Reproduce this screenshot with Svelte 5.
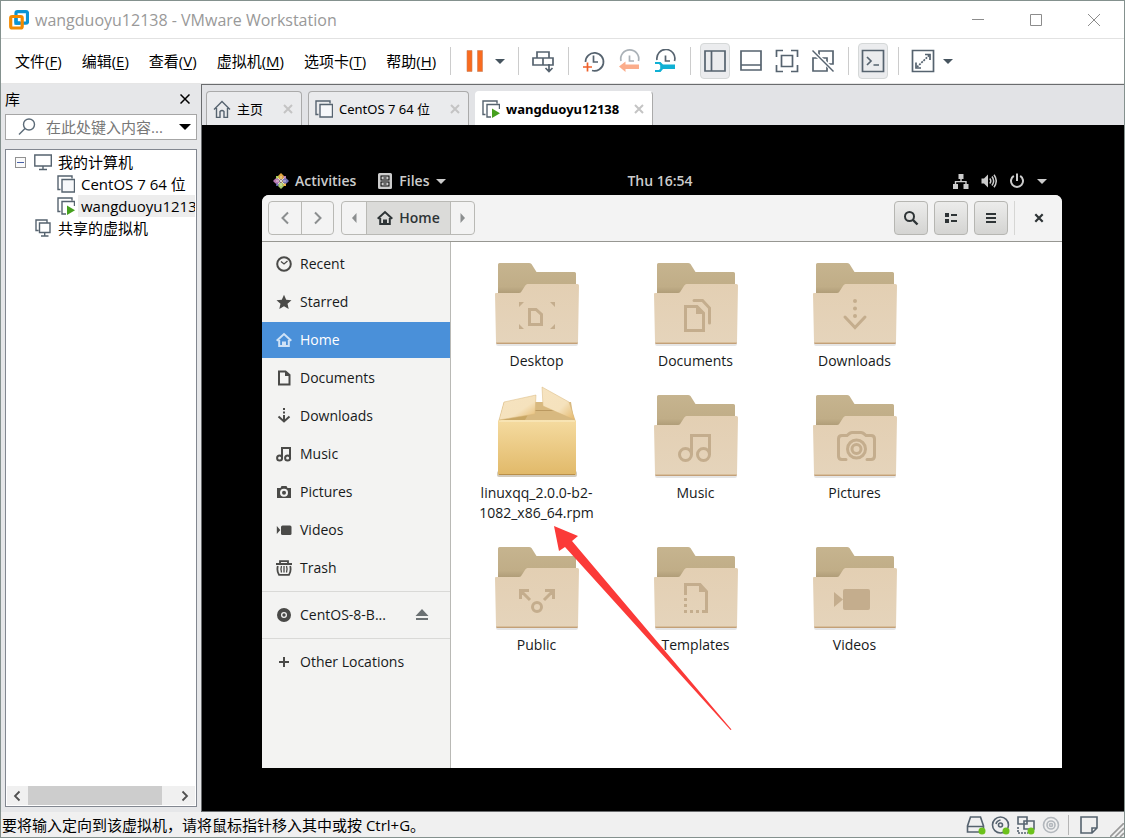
<script lang="ts">
  type Item = { icon: string; label: string };

  const menus = [
    { text: '文件', key: 'F' },
    { text: '编辑', key: 'E' },
    { text: '查看', key: 'V' },
    { text: '虚拟机', key: 'M' },
    { text: '选项卡', key: 'T' },
    { text: '帮助', key: 'H' }
  ];

  const tabs = [
    { icon: 'homeTab', label: '主页' },
    { icon: 'vm', label: 'CentOS 7 64 位' },
    { icon: 'vmOn', label: 'wangduoyu12138' }
  ];

  const places: Item[] = [
    { icon: 'recent', label: 'Recent' },
    { icon: 'star', label: 'Starred' },
    { icon: 'home', label: 'Home' },
    { icon: 'doc', label: 'Documents' },
    { icon: 'down', label: 'Downloads' },
    { icon: 'music', label: 'Music' },
    { icon: 'camera', label: 'Pictures' },
    { icon: 'video', label: 'Videos' },
    { icon: 'trash', label: 'Trash' }
  ];

  const files: Item[] = [
    { icon: 'fDesktop', label: 'Desktop' },
    { icon: 'fDocuments', label: 'Documents' },
    { icon: 'fDownloads', label: 'Downloads' },
    { icon: 'package', label: 'linuxqq_2.0.0-b2-\n1082_x86_64.rpm' },
    { icon: 'fMusic', label: 'Music' },
    { icon: 'fPictures', label: 'Pictures' },
    { icon: 'fPublic', label: 'Public' },
    { icon: 'fTemplates', label: 'Templates' },
    { icon: 'fVideos', label: 'Videos' }
  ];

  let activeTab = $state(2);
  let activePlace = $state('Home');
  let search = $state('');

  // 24x24 toolbar icons
  const tool: Record<string, string> = {
    pause: '<path fill="#f96b1f" stroke="#c9825c" stroke-width=".6" d="M4 1.500h5v21H4zM14.500 1.500h5v21h-5z"/>',
    send: '<path d="M6 3h12v6H6zM2 9h10v7H2zM12 9h10v7H12zM18 15v7M14.500 19l3.500 3.500L21.500 19"/>',
    snapshot: '<path d="M4.500 13a9 9 0 1 1 6.500 8.500M12.500 6.500V13H17"/><path stroke="#f0602a" d="M2 18h9M6.500 13.500v9"/>',
    revert: '<g opacity=".5"><path d="M4 12a9 9 0 1 1 17.500 0M12.500 6.500V12H17"/></g><path fill="#fbad8b" stroke="none" d="M2 17.500l6.500-5v3H22v4.500H8.500v3z"/>',
    manage: '<path d="M4 11a9 9 0 1 1 17.500 1M12.500 6.500V12H17"/><path fill="#0fb0d4" stroke="none" d="M2 13h5.500l2.500 2.500h12v4.500H10l-2.500 3H2v-2h4l1.200-1.200v-3.600L6 15H2z"/>',
    side: '<path d="M2 2h20v20H2zM8.500 2v20"/>',
    thumb: '<path d="M2 2h20v19H2zM2 16h20"/>',
    full: '<path d="M1.500 8V1.500H8M16 1.500h6.500V8M22.500 16v6.500H16M8 22.500H1.500V16M6.500 6.500h11v11h-11z"/>',
    unity: '<path d="M8 8V2h14v13h-5M2 9h14v13H2z"/><path stroke="#fff" stroke-width="4" d="M2 2.500L23 22"/><path stroke-width="1.400" d="M1.500 1.500l21 21"/>',
    console: '<path d="M1.500 1.500h21v21h-21z"/><path d="M6 8l4 4-4 4M12.500 16H18"/>',
    stretch: '<path d="M1.500 1.500h21v21h-21z"/><path d="M14 5.500h5V11M10 19H5v-5.500"/><path stroke-dasharray="2 1" d="M6 18L18.500 6"/>'
  };

  // 18x18 icons of the library and tabs
  const small: Record<string, string> = {
    homeTab: '<path d="M1 9.500l8-8 8 8M3.500 8v9.500H7v-6q2-2 4 0v6h3.500V8"/>',
    vm: '<path d="M3.500 14.500H1V1h14v2.500"/><path fill="#f7f8fa" d="M5 4.500h12.500v12.500H5z"/>',
    vmOn: '<path d="M3.500 14.500H1V1h14v2.500M9 17H5V4.500h12.500V9"/><path fill="#46a01e" stroke="none" d="M10 8.500l8 4.750-8 4.750z"/>',
    pc: '<path d="M.8 2h16.500v11H.8zM5 16.500h8M9 13v3"/>',
    shared: '<path d="M4.500 11.500H2V1h11v2.500M5.500 4H16v9.500H5.500zM7 17h7.500M10.700 13.500V17"/>'
  };

  // 16x16 symbolic icons of the file manager
  const sym: Record<string, string> = {
    recent: '<path fill="none" stroke="currentColor" stroke-width="2" d="M8 1.200a6.800 6.800 0 1 1 0 13.600A6.800 6.800 0 0 1 8 1.200z"/><path fill="none" stroke="currentColor" stroke-width="1.300" d="M5 5.500l3 2.500 3.500-3"/>',
    star: '<path d="M8 .8l2.200 4.900 5.300.6-4 3.500 1.200 5.200L8 12.300 3.300 15l1.200-5.200-4-3.500 5.300-.6z"/>',
    home: '<path fill="none" stroke="currentColor" stroke-width="2" d="M.7 8.700L8 2l7.300 6.700M3.200 8v6h9.600V8"/><path d="M6 9.500h4V15H6z"/>',
    doc: '<path fill="none" stroke="currentColor" stroke-width="2" d="M3 1.500h6.500L13.500 5v9.500H3z"/><path d="M9 1v5h5z"/>',
    down: '<path d="M7 0h2v2H7zM7 3.500h2v2H7zM7 7h2v6H7z"/><path fill="none" stroke="currentColor" stroke-width="2" d="M2.500 8.500L8 13.500l5.500-5"/>',
    music: '<path fill="none" stroke="currentColor" stroke-width="2" d="M6 12V2h8v10"/><circle cx="3.600" cy="12" r="2.500" fill="none" stroke="currentColor" stroke-width="2"/><circle cx="11.600" cy="12" r="2.500" fill="none" stroke="currentColor" stroke-width="2"/>',
    camera: '<path fill-rule="evenodd" d="M1 4h3.500l1-2h5l1 2H15v10H1zM8 4.700a4 4 0 1 0 0 8 4 4 0 0 0 0-8z"/><circle cx="8" cy="8.700" r="2"/>',
    video: '<rect x="5" y="3.500" width="10.500" height="9.500" rx="1.500"/><path d="M.8 4l3.500 4-3.500 4z"/>',
    trash: '<path fill="none" stroke="currentColor" stroke-width="1.800" d="M0 4h16M4 3.500V1.200h8v2.300M1.800 6q-1.200 5 1.200 8.800h10q2.400-3.800 1.200-8.800"/><path fill="none" stroke="currentColor" stroke-width="1.300" d="M5.500 6q-1.200 3.500 0 6.500M8 6v6.500M10.500 6q1.200 3.500 0 6.500"/>',
    disc: '<path fill-rule="evenodd" d="M8 1a7 7 0 1 1 0 14A7 7 0 0 1 8 1zm0 4a3 3 0 1 0 0 6 3 3 0 0 0 0-6z"/><circle cx="8" cy="8" r="1.700"/>',
    plus: '<path d="M7 3h2v4h4v2H9v4H7V9H3V7h4z"/>',
    eject: '<path d="M8 2l6.500 7h-13zM2 11h12v2H2z"/>',
    back: '<path fill="none" stroke="currentColor" stroke-width="2" d="M11 2.500L5.500 8l5.500 5.500"/>',
    forward: '<path fill="none" stroke="currentColor" stroke-width="2" d="M5 2.500L10.500 8 5 13.500"/>',
    left: '<path d="M10.500 3v10L6 8z"/>',
    right: '<path d="M5.500 3v10L10 8z"/>',
    find: '<circle cx="6.500" cy="6.500" r="4.500" fill="none" stroke="currentColor" stroke-width="2"/><path fill="none" stroke="currentColor" stroke-width="2.400" d="M10 10l4.500 4.500"/>',
    list: '<path d="M2 3h4v4H2zM2 9h4v4H2zM8 4h6v2H8zM8 10h6v2H8z"/>',
    burger: '<path d="M3 3h10v2H3zM3 7h10v2H3zM3 11h10v2H3z"/>',
    close: '<path fill="none" stroke="currentColor" stroke-width="2.200" d="M4.300 4.300l7.400 7.400M11.700 4.300l-7.400 7.400"/>',
    drawer: '<path fill-rule="evenodd" d="M2.500 0h11A1.500 1.500 0 0 1 15 1.500v13a1.500 1.500 0 0 1-1.500 1.500h-11A1.500 1.500 0 0 1 1 14.500v-13A1.500 1.500 0 0 1 2.500 0zM3.500 2.500v5h9v-5zm0 6v5h9v-5z"/><path d="M4.500 3.500h7v3h-7zM4.500 9.500h7v3h-7z"/><path fill="#000" d="M6.500 4.500h3v1h-3zM6.500 10.500h3v1h-3z"/>',
    network: '<path d="M5.500 1h5v5h-5zM0 11h5v5H0zM10.500 11h5v5h-5zM7.300 6h1.400v2h5v3h-1.400V9.300H3.200V11H1.800V8h5.500z"/>',
    sound: '<path d="M.5 5.500H3L7 1.500v13l-4-4H.5z"/><path fill="none" stroke="currentColor" stroke-width="1.500" d="M8.800 5.500q2 2.500 0 5M11 3.500q3.300 4.500 0 9M13 1.800q4.500 6.200 0 12.400"/>',
    power: '<path fill="none" stroke="currentColor" stroke-width="2" d="M4.800 2.800a6 6 0 1 0 6.400 0M8 .5V8"/>',
    logo: '<path fill="#a3ca53" d="M3 3h4.500v4.500H3z"/><path fill="#b67bb0" d="M8.500 3H13v4.500H8.500z"/><path fill="#efb13c" d="M8.500 8.500H13V13H8.500z"/><path fill="#5c5aa0" d="M3 8.500h4.500V13H3z"/><path fill="#e0a53e" d="M8 0l2.500 2.500V6h-5V2.500z"/><path fill="#7573b8" d="M16 8l-2.500 2.500H10v-5h3.500z"/><path fill="#a8c869" d="M8 16l-2.500-2.500V10h5v3.500z"/><path fill="#b97ab3" d="M0 8l2.500-2.500H6v5H2.500z"/><path stroke="#f4efe8" stroke-width=".7" d="M8 3v10M3 8h10M4.500 4.500l7 7M11.500 4.500l-7 7"/>'
  };

  // emblems on the 84x84 folders
  const emblem: Record<string, string> = {
    fDesktop: '<path d="M34.500 46.500H41l5.500 5V61.500h-12z"/><path fill="#c4ad8d" stroke="none" d="M24 39h5l-5 5zM60 39v5l-5-5zM24 66v-5l5 5zM60 66h-5l5-5z"/>',
    fDocuments: '<path d="M31.500 43.500H43l6.500 6.500v17.500h-18z"/><path fill="#c4ad8d" stroke="none" d="M42 42v9h9z"/><path stroke-linecap="round" d="M40 37.500h8.500L55.500 45v15"/>',
    fDownloads: '<path stroke-linecap="round" stroke-width="4" d="M42 38v.01M42 45.500v.01M42 53v.01"/><path stroke-linecap="round" d="M32 54l10 10.500L52 54"/>',
    fMusic: '<circle cx="31.500" cy="59.500" r="6"/><circle cx="49.500" cy="59.500" r="6"/><path d="M37.500 60V40.500h18V60"/>',
    fPictures: '<circle cx="43.500" cy="54" r="9"/><circle cx="43.500" cy="54" r="4.500"/><path stroke-linecap="round" d="M33 64.500h-4q-3.500 0-3.500-3.500V44q0-3.500 3.500-3.500h5q3-3 5-3h9q2 0 5 3h5q3.500 0 3.500 3.500v17q0 3.500-3.500 3.500h-4"/>',
    fPublic: '<circle cx="42" cy="60" r="4.500"/><path d="M35 53L26 44M25.500 52v-8.500H34M49 53l9-9M58.500 52v-8.500H50"/>',
    fTemplates: '<path d="M31.500 48V37.500H46l6.500 7V66"/><path fill="#c4ad8d" stroke="none" d="M45 36v9h9z"/><path stroke-dasharray="3 3" d="M31.500 51v12M30 64.500h24"/>',
    fVideos: '<path fill="#c4ad8d" stroke="none" d="M21 45l9 7.500-9 7.500z"/><rect fill="#c4ad8d" stroke="none" x="30" y="42" width="27" height="21" rx="2"/>'
  };
</script>

{#snippet toolBtn(name: string, title: string, pressed = false)}
  <button class="tool" class:pressed aria-label={title}>
    <svg viewBox="0 0 24 24" width="24" height="24">{@html tool[name]}</svg>
  </button>
{/snippet}

{#snippet smallIcon(name: string)}
  <svg class="small" viewBox="0 0 18 18" width="18" height="18">{@html small[name]}</svg>
{/snippet}

{#snippet symIcon(name: string)}
  <svg class="sym" viewBox="0 0 16 16" width="16" height="16">{@html sym[name]}</svg>
{/snippet}

<div class="window">
  <header class="titlebar">
    <svg viewBox="0 0 20 20" width="20" height="20" fill="none" stroke-width="3.200">
      <rect x="7" y="1.700" width="11.500" height="11.500" rx="1.500" stroke="#0b94d3" />
      <rect x="1.700" y="6.500" width="11.500" height="11.500" rx="1.500" stroke="#f38b00" />
      <path d="M7 8v5.200h4" stroke="#0b94d3" />
    </svg>
    <h1>wangduoyu12138 - VMware Workstation</h1>
    <div class="wm">
      <button aria-label="最小化"><svg viewBox="0 0 12 12" width="12" height="12"><path d="M0 5.500h12" /></svg></button>
      <button aria-label="最大化"><svg viewBox="0 0 12 12" width="12" height="12"><path d="M.5.5h11v11H.5z" /></svg></button>
      <button aria-label="关闭"><svg viewBox="0 0 12 12" width="12" height="12"><path d="M0 0l12 12M12 0L0 12" /></svg></button>
    </div>
  </header>

  <div class="toolbar">
    <nav class="menus">
      {#each menus as menu}
        <button>{menu.text}(<u>{menu.key}</u>)</button>
      {/each}
    </nav>
    <div class="group">
      {@render toolBtn('pause', '挂起')}
      <button class="caret" aria-label="电源选项"></button>
    </div>
    <div class="group">
      {@render toolBtn('send', 'Ctrl+Alt+Del')}
    </div>
    <div class="group">
      {@render toolBtn('snapshot', '拍摄快照')}
      {@render toolBtn('revert', '恢复快照')}
      {@render toolBtn('manage', '管理快照')}
    </div>
    <div class="group">
      {@render toolBtn('side', '显示库', true)}
      {@render toolBtn('thumb', '缩略图栏')}
      {@render toolBtn('full', '全屏')}
      {@render toolBtn('unity', 'Unity')}
    </div>
    <div class="group">
      {@render toolBtn('console', '控制台视图', true)}
    </div>
    <div class="group">
      {@render toolBtn('stretch', '自由拉伸')}
      <button class="caret" aria-label="拉伸选项"></button>
    </div>
  </div>

  <div class="body">
    <aside class="library">
      <div class="lib-title">
        <h2>库</h2>
        <button aria-label="关闭库"><svg viewBox="0 0 10 10" width="10" height="10"><path d="M.5.5l9 9M9.500.5l-9 9" stroke="#000" stroke-width="1.500" /></svg></button>
      </div>
      <div class="search">
        <svg viewBox="0 0 18 18" width="18" height="18" fill="none" stroke="#5c6b78" stroke-width="1.400">
          <circle cx="11" cy="6.500" r="5.500" /><path d="M7 10.500L1 16.500" />
        </svg>
        <input type="text" aria-label="搜索" placeholder="在此处键入内容..." bind:value={search} />
        <button class="caret black" aria-label="筛选"></button>
      </div>
      <div class="tree">
        <ul>
          <li>
            <span class="expander"></span>
            {@render smallIcon('pc')}
            <span class="name">我的计算机</span>
          </li>
          <li class="child">{@render smallIcon('vm')}<span class="name">CentOS 7 64 位</span></li>
          <li class="child">{@render smallIcon('vmOn')}<span class="name selected">wangduoyu12138</span></li>
          <li class="shared">{@render smallIcon('shared')}<span class="name">共享的虚拟机</span></li>
        </ul>
        <div class="scrollbar">
          <svg viewBox="0 0 8 12" width="8" height="12"><path d="M6.500 1.500L2 6l4.500 4.500" /></svg>
          <div class="track"><div class="thumb"></div></div>
          <svg viewBox="0 0 8 12" width="8" height="12"><path d="M1.500 1.500L6 6l-4.500 4.500" /></svg>
        </div>
      </div>
    </aside>

    <main class="main">
      <div class="tabs">
        {#each tabs as tab, i}
          <div class="tab" class:active={activeTab === i}>
            <button class="tab-label" onclick={() => (activeTab = i)}>
              {@render smallIcon(tab.icon)}{tab.label}
            </button>
            <button class="tab-close" aria-label="关闭 {tab.label}">
              <svg viewBox="0 0 10 10" width="10" height="10"><path d="M1 1l8 8M9 1L1 9" /></svg>
            </button>
          </div>
        {/each}
      </div>

      <div class="screen">
        <div class="topbar">
          <div class="top-left">
            <button>{@render symIcon('logo')}Activities</button>
            <button>{@render symIcon('drawer')}Files<span class="tri"></span></button>
          </div>
          <span class="clock">Thu 16:54</span>
          <div class="top-right">
            {@render symIcon('network')}
            {@render symIcon('sound')}
            {@render symIcon('power')}
            <span class="tri"></span>
          </div>
        </div>

        <section class="nautilus">
          <div class="headerbar">
            <div class="linked nav">
              <button aria-label="Back">{@render symIcon('back')}</button>
              <button aria-label="Forward">{@render symIcon('forward')}</button>
            </div>
            <div class="linked path">
              <button aria-label="Scroll left">{@render symIcon('left')}</button>
              <button class="current">{@render symIcon('home')}Home</button>
              <button aria-label="Scroll right">{@render symIcon('right')}</button>
            </div>
            <div class="actions">
              <button aria-label="Search">{@render symIcon('find')}</button>
              <button aria-label="List view">{@render symIcon('list')}</button>
              <button aria-label="Menu">{@render symIcon('burger')}</button>
            </div>
            <button class="win-close" aria-label="Close">{@render symIcon('close')}</button>
          </div>

          <div class="content">
            <nav class="places">
              {#each places as place}
                <button class:current={activePlace === place.label} onclick={() => (activePlace = place.label)}>
                  {@render symIcon(place.icon)}<span>{place.label}</span>
                </button>
              {/each}
              <hr />
              <button>{@render symIcon('disc')}<span>CentOS-8-B...</span><i class="eject">{@render symIcon('eject')}</i></button>
              <hr />
              <button>{@render symIcon('plus')}<span>Other Locations</span></button>
            </nav>

            <div class="files">
              <svg class="defs" width="0" height="0" aria-hidden="true">
                <defs>
                  <linearGradient id="folderBack" x2="0" y2="1">
                    <stop offset="0" stop-color="#c6b48f" /><stop offset=".7" stop-color="#c0ad87" /><stop offset="1" stop-color="#a6936f" />
                  </linearGradient>
                  <linearGradient id="folderFront" x2="0" y2="1">
                    <stop offset="0" stop-color="#e3cfb3" /><stop offset="1" stop-color="#e5d4bb" />
                  </linearGradient>
                  <linearGradient id="boxFront" x2="0" y2="1">
                    <stop offset="0" stop-color="#f5dba0" /><stop offset="1" stop-color="#e1b969" />
                  </linearGradient>
                  <linearGradient id="boxFlap" x2="1" y2="1">
                    <stop offset="0" stop-color="#f6e3c0" /><stop offset=".6" stop-color="#f5e2bd" /><stop offset="1" stop-color="#e3b668" />
                  </linearGradient>
                </defs>
              </svg>

              {#each files as file}
                <button class="file">
                  <svg viewBox="0 0 84 84" width="84" height="84">
                    {#if file.icon === 'package'}
                      <rect x="2" y="76" width="80" height="6" rx="2" fill="#8f7c5a" opacity=".4" />
                      <path fill="#c9a764" d="M9 7h65l6 19H4z" />
                      <path fill="#d8b980" d="M40 7h36l3 18H30z" />
                      <path stroke="#bb9960" d="M38 15.500h26" />
                      <rect x="3" y="25" width="78" height="55" rx="1" fill="url(#boxFront)" />
                      <path stroke="#fbedc7" d="M4 26h76" />
                      <path stroke="#b98f49" d="M4 79.500h76" />
                      <path fill="url(#boxFlap)" stroke="#d9b67a" stroke-width=".5" d="M4 25L9 7l32-7-1 19z" />
                      <path fill="url(#boxFlap)" stroke="#d9b67a" stroke-width=".5" d="M47-8l27 15 6 18-32-14z" />
                    {:else}
                      <rect x="1" y="76" width="82" height="7" rx="2" fill="#000" opacity=".1" />
                      <path fill="url(#folderBack)" d="M3 1.500Q3 0 4.500 0H34q1.500 0 2.500 1l5 8h38q1.500 0 1.500 1.500V34H3z" />
                      <path fill="#c3a078" d="M1 70h82v9.500q0 1.500-1.500 1.500h-79Q1 81 1 79.500z" />
                      <path fill="url(#folderFront)" d="M0 31q0-1 1-1h23q1.500 0 2.300-1.200l4-6.300Q31.200 21 32.500 21H82.500q1.500 0 1.500 1.500L83 79q0 1-1.500 1h-79Q1 80 1 79z" />
                      <path stroke="#d8bf9c" d="M2 79.500h80" />
                      <g fill="none" stroke="#c4ad8d" stroke-width="3">{@html emblem[file.icon]}</g>
                    {/if}
                  </svg>
                  <span>{file.label}</span>
                </button>
              {/each}

              <svg class="pointer" viewBox="0 0 180 206" width="180" height="206" aria-hidden="true">
                <path fill="#fb3a38" d="M1 0l24 10-6 5 159.500 188.500-1 .5L12 21l-6 4z" />
              </svg>
            </div>
          </div>
        </section>
      </div>
    </main>
  </div>

  <footer class="status">
    <span>要将输入定向到该虚拟机，请将鼠标指针移入其中或按 Ctrl+G。</span>
    <div class="devices">
      <svg viewBox="0 0 20 20" width="20" height="20"><path d="M4.500 2h10l3 9v6H1.500v-6zM1.500 11.500h16" /><circle class="dot" cx="16" cy="16" r="3.500" /></svg>
      <svg viewBox="0 0 20 20" width="20" height="20"><circle cx="9.500" cy="10" r="8" /><circle cx="9.500" cy="10" r="2" /><path d="M9.500 5q-4 1-4.500 4" /><circle class="dot" cx="15" cy="16" r="3.500" /></svg>
      <svg viewBox="0 0 20 20" width="20" height="20"><path d="M2 2h9v7H2zM8 6h10v8H8z" /><path stroke-dasharray="2 1" d="M2 12v6h10" /><circle class="dot" cx="15" cy="16" r="3.500" /></svg>
      <svg viewBox="0 0 20 20" width="20" height="20" opacity=".4"><circle cx="10" cy="10" r="7.500" /><circle cx="10" cy="10" r="4" /><circle cx="10" cy="10" r="1.500" /></svg>
    </div>
    <div class="notes">
      <svg viewBox="0 0 20 20" width="20" height="20"><path d="M2 2h16v11l-5 5H2zM18 13h-5v5" /></svg>
    </div>
    <svg class="grip" viewBox="0 0 14 14" width="14" height="14"><path d="M0 14L14 0M5 14l9-9M10 14l4-4" /></svg>
  </footer>
</div>

<style>
  :global(body) {
    margin: 0;
  }

  .window {
    display: flex;
    flex-direction: column;
    box-sizing: border-box;
    min-height: 100vh;
    border: 1px solid #84918e;
    background: #fff;
    color: #000;
    font-family: 'Open Sans', 'Noto Sans CJK SC', sans-serif;
    font-size: 15px;
    line-height: 22px;
  }

  button {
    display: flex;
    align-items: center;
    justify-content: center;
    padding: 0;
    border: 0;
    background: none;
    color: inherit;
    font: inherit;
    white-space: nowrap;
  }

  svg {
    display: block;
    flex: none;
    fill: none;
  }

  h1,
  h2 {
    margin: 0;
    font-size: 15px;
    font-weight: 400;
  }

  .titlebar {
    display: flex;
    align-items: center;
    gap: 6px;
    height: 37px;
    padding: 0 1px 0 8px;
    border-bottom: 1px solid #e2e2e2;
  }

  .titlebar h1 {
    flex: 1;
    color: #999;
    font-size: 16px;
  }

  .wm {
    display: flex;
  }

  .wm button {
    width: 58px;
    height: 36px;
  }

  .wm path {
    stroke: #8c8c8c;
  }

  .toolbar {
    display: flex;
    align-items: center;
    height: 44px;
    border-bottom: 1px solid #e6e6e6;
  }

  .menus {
    display: flex;
    gap: 20px;
    padding: 0 14px;
  }

  .menus u {
    text-underline-offset: 2px;
  }

  .group {
    display: flex;
    align-items: center;
    gap: 6px;
    height: 28px;
    padding: 0 10px 0 9px;
    border-left: 1px solid #ccc;
  }

  .tool {
    width: 30px;
    height: 36px;
    border: 1px solid transparent;
    border-radius: 4px;
  }

  .tool.pressed {
    background: #ebecee;
    border-color: #d5d8d8;
  }

  .tool svg {
    stroke: #56636f;
    stroke-width: 1.7;
  }

  .caret {
    width: 16px;
    margin-left: -4px;
  }

  .caret::before,
  .tri {
    content: '';
    border: 5px solid transparent;
    border-top-color: #46545f;
    border-bottom: 0;
  }

  .caret.black::before {
    border-width: 6px 6px 0;
    border-top-color: #000;
  }

  .body {
    display: flex;
    flex: 1;
    background: #e6e7e9;
  }

  .library {
    display: flex;
    flex-direction: column;
    box-sizing: border-box;
    width: 200px;
    padding: 4px 4px 5px;
  }

  .lib-title {
    display: flex;
    justify-content: space-between;
    padding-right: 7px;
    margin-bottom: 4px;
  }

  .search {
    display: flex;
    align-items: center;
    box-sizing: border-box;
    height: 26px;
    margin-bottom: 9px;
    padding-left: 12px;
    border: 1px solid #a6a6a6;
    background: #fff;
  }

  .search input {
    flex: 1;
    min-width: 0;
    padding: 0 0 0 10px;
    border: 0;
    outline: 0;
    background: none;
    font: inherit;
  }

  .search input::placeholder {
    color: #777;
  }

  .search .caret {
    width: 22px;
    margin: 0;
  }

  .tree {
    display: flex;
    flex: 1;
    flex-direction: column;
    justify-content: space-between;
    border: 1px solid #828790;
    background: #fff;
    padding: 1px;
    overflow: hidden;
  }

  .tree ul {
    margin: 0;
    padding: 0;
    list-style: none;
  }

  .tree li {
    display: flex;
    align-items: center;
    gap: 3px;
    padding-left: 8px;
  }

  .tree li.child {
    padding-left: 50px;
  }

  .tree li.shared {
    padding-left: 27px;
  }

  .tree .name {
    flex: 1;
    padding-left: 3px;
    overflow: hidden;
    white-space: nowrap;
  }

  .tree .selected {
    background: #ededed;
  }

  .expander {
    display: grid;
    place-items: center;
    width: 9px;
    height: 9px;
    margin-right: 5px;
    border: 1px solid #919191;
    background: #fafafa;
  }

  .expander::before {
    content: '';
    width: 7px;
    height: 1px;
    background: #4760a8;
  }

  .small {
    stroke: #56636f;
    stroke-width: 1.4;
  }

  .scrollbar {
    display: flex;
    align-items: center;
    gap: 7px;
    height: 19px;
    padding: 0 6px;
    background: #f0f0f0;
  }

  .scrollbar svg {
    stroke: #505050;
    stroke-width: 1.8;
  }

  .track {
    flex: 1;
    height: 19px;
  }

  .thumb {
    width: 92%;
    height: 19px;
    background: #cdcdcd;
  }

  .main {
    display: flex;
    flex: 1;
    flex-direction: column;
    min-width: 0;
    border: 1px solid #6a6c6e;
    border-right: 0;
  }

  .tabs {
    display: flex;
    align-items: flex-end;
    gap: 6px;
    height: 40px;
    padding-left: 4px;
    background: #e2e3e6;
    font-family: 'Noto Sans', 'Noto Sans CJK SC', sans-serif;
    font-size: 13px;
  }

  .tab {
    display: flex;
    align-items: center;
    gap: 20px;
    height: 33px;
    padding: 0 8px 0 6px;
    border: 1px solid #aaa;
    border-bottom: 0;
    border-radius: 4px 4px 0 0;
    background: #eaebed;
  }

  .tab.active {
    gap: 15px;
    border-left-color: #fff;
    border-top-color: #fff;
    background: #fff;
    font-weight: 700;
  }

  .tab-label {
    gap: 6px;
  }

  .tab-close path {
    stroke: #c4c4c4;
    stroke-width: 2;
  }

  /* guest display */
  .screen {
    display: flex;
    flex: 1;
    flex-direction: column;
    padding: 42px 62px 43px 60px;
    background: #000;
    font-family: 'Open Sans', sans-serif;
    font-size: 14px;
    line-height: 20px;
  }

  .sym {
    fill: currentColor;
  }

  .topbar {
    display: grid;
    grid-template-columns: 1fr auto 1fr;
    align-items: center;
    height: 28px;
    padding: 0 15px 0 11px;
    color: #ccc;
    font-weight: 600;
  }

  .top-left,
  .top-right {
    display: flex;
    align-items: center;
    gap: 21px;
  }

  .top-left button {
    gap: 6px;
  }

  .top-right {
    justify-content: flex-end;
    gap: 12px;
  }

  .tri {
    border-top-color: #ccc;
  }

  .nautilus {
    display: flex;
    flex: 1;
    flex-direction: column;
    border-radius: 7px 7px 0 0;
    background: #fff;
    overflow: hidden;
  }

  .headerbar {
    display: flex;
    align-items: center;
    gap: 7px;
    box-sizing: border-box;
    height: 47px;
    padding: 0 6px;
    border-bottom: 1px solid #979792;
    background: #f3f3f3;
    color: #2e3436;
  }

  .linked {
    display: flex;
    height: 32px;
    border: 1px solid #b9b9b5;
    border-radius: 4px;
    color: #8b8e8f;
  }

  .linked button + button {
    border-left: 1px solid #b9b9b5;
  }

  .nav button {
    width: 32px;
  }

  .path button {
    width: 24px;
  }

  .path .current {
    gap: 6px;
    width: 84px;
    background: #dbdbd9;
    color: #2e3436;
    font-weight: 600;
  }

  .actions {
    display: flex;
    gap: 6px;
    margin-left: auto;
    padding-right: 6px;
    border-right: 1px solid #d6d6d4;
  }

  .actions button {
    width: 34px;
    height: 34px;
    border: 1px solid #b6b6b2;
    border-radius: 4px;
    background: linear-gradient(#ececeb, #d4d4d2);
  }

  .win-close {
    width: 34px;
    height: 34px;
  }

  .content {
    display: flex;
    flex: 1;
  }

  .places {
    display: flex;
    flex-direction: column;
    gap: 2px;
    width: 188px;
    padding-top: 4px;
    border-right: 1px solid #b9b9b5;
    background: #f3f3f2;
  }

  .places button {
    flex: none;
    justify-content: flex-start;
    gap: 8px;
    height: 36px;
    padding: 0 20px 0 14px;
    color: #171a1b;
  }

  .places .sym {
    color: #4a4a48;
  }

  .places .current {
    background: #4a90d9;
    color: #fff;
  }

  .places .current .sym {
    color: #cfe2f6;
  }

  .places .eject {
    margin-left: auto;
  }

  .places .eject .sym {
    color: #6b7173;
  }

  .places hr {
    width: 100%;
    height: 1px;
    margin: 3px 0;
    border: 0;
    background: #d9d9d7;
  }

  .files {
    position: relative;
    display: grid;
    flex: 1;
    grid-template-columns: repeat(auto-fill, 159px);
    align-content: start;
    padding: 21px 6px;
    background: #fff;
  }

  .defs {
    position: absolute;
  }

  .file {
    flex-direction: column;
    justify-content: flex-start;
    gap: 4px;
    padding-bottom: 24px;
    color: #171a1b;
  }

  .file svg {
    overflow: visible;
  }

  .file span {
    white-space: pre-line;
  }

  .pointer {
    position: absolute;
    top: 284px;
    left: 102px;
    pointer-events: none;
  }

  .status {
    display: flex;
    align-items: center;
    height: 25px;
    padding-left: 1px;
    background: #f0f0f0;
  }

  .status svg {
    stroke: #56636f;
    stroke-width: 1.6;
  }

  .devices {
    display: flex;
    gap: 5px;
    margin-left: auto;
    padding-right: 7px;
    border-right: 1px solid #b5b5b5;
  }

  .notes {
    padding: 0 11px 0 10px;
  }

  .status .dot {
    fill: #6cc11c;
    stroke: none;
  }

  .status .grip {
    align-self: flex-end;
    stroke: #9a9a9a;
  }
</style>
